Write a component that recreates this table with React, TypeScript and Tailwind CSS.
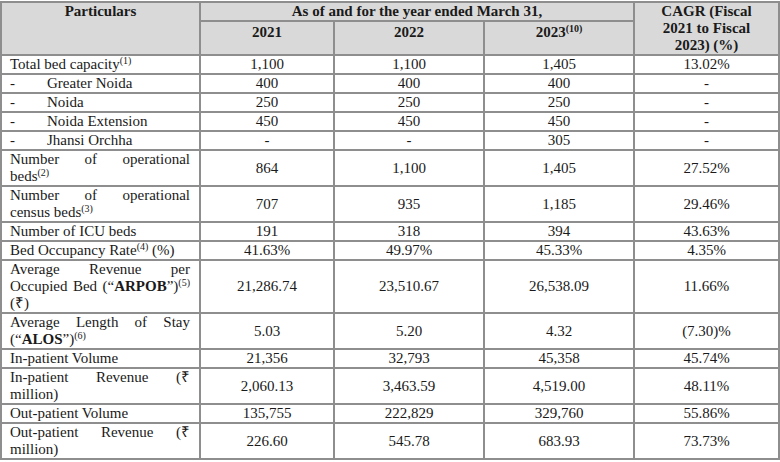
type Row = {
  label: React.ReactNode[];
  indent?: boolean;
  values: React.ReactNode[];
};

const Sup = ({ children }: { children: React.ReactNode }) => (
  <sup className="text-[10px]">{children}</sup>
);

const rows: Row[] = [
  { label: [<>Total bed capacity<Sup>(1)</Sup></>], values: ['1,100', '1,100', '1,405', '13.02%'] },
  { label: ['Greater Noida'], indent: true, values: ['400', '400', '400', '-'] },
  { label: ['Noida'], indent: true, values: ['250', '250', '250', '-'] },
  { label: ['Noida Extension'], indent: true, values: ['450', '450', '450', '-'] },
  { label: ['Jhansi Orchha'], indent: true, values: ['-', '-', '305', '-'] },
  {
    label: ['Number of operational', <>beds<Sup>(2)</Sup></>],
    values: ['864', '1,100', '1,405', '27.52%'],
  },
  {
    label: ['Number of operational', <>census beds<Sup>(3)</Sup></>],
    values: ['707', '935', '1,185', '29.46%'],
  },
  { label: ['Number of ICU beds'], values: ['191', '318', '394', '43.63%'] },
  {
    label: [<>Bed Occupancy Rate<Sup>(4)</Sup> (%)</>],
    values: ['41.63%', '49.97%', '45.33%', '4.35%'],
  },
  {
    label: [
      'Average Revenue per',
      <>Occupied Bed (“<b>ARPOB</b>”)<Sup>(5)</Sup></>,
      '(₹)',
    ],
    values: ['21,286.74', '23,510.67', '26,538.09', '11.66%'],
  },
  {
    label: ['Average Length of Stay', <>(“<b>ALOS</b>”)<Sup>(6)</Sup></>],
    values: ['5.03', '5.20', '4.32', '(7.30)%'],
  },
  { label: ['In-patient Volume'], values: ['21,356', '32,793', '45,358', '45.74%'] },
  {
    label: ['In-patient Revenue (₹', 'million)'],
    values: ['2,060.13', '3,463.59', '4,519.00', '48.11%'],
  },
  { label: ['Out-patient Volume'], values: ['135,755', '222,829', '329,760', '55.86%'] },
  {
    label: ['Out-patient Revenue (₹', 'million)'],
    values: ['226.60', '545.78', '683.93', '73.73%'],
  },
];

const cell = 'border-2 border-[#8e8e8e] p-0';

export default function App() {
  return (
    <div className="w-[780px] h-[462px] bg-white pt-[1px]">
      <table className="table-fixed border-collapse w-[778px] text-[15px] leading-[17px] text-[#1a1a1a] font-['Liberation_Serif','Times_New_Roman',serif]">
        <colgroup>
          <col className="w-[199px]" />
          <col className="w-[134px]" />
          <col className="w-[150px]" />
          <col className="w-[150px]" />
          <col className="w-[145px]" />
        </colgroup>
        <thead className="bg-[#d9d9d9] font-bold">
          <tr>
            <th rowSpan={2} className={`${cell} align-top text-center`}>
              Particulars
            </th>
            <th colSpan={3} className={`${cell} align-top text-center`}>
              As of and for the year ended March 31,
            </th>
            <th rowSpan={2} className={`${cell} align-top text-center`}>
              CAGR (Fiscal
              <br />
              2021 to Fiscal
              <br />
              2023) (%)
            </th>
          </tr>
          <tr>
            <th className={`${cell} align-top text-center h-[34px] pt-[2px]`}>2021</th>
            <th className={`${cell} align-top text-center pt-[2px]`}>2022</th>
            <th className={`${cell} align-top text-center pt-[2px]`}>
              2023<Sup>(10)</Sup>
            </th>
          </tr>
        </thead>
        <tbody>
          {rows.map((row, i) => (
            <tr key={i}>
              <td className={`${cell} pl-[8px] pr-[9px] align-middle`}>
                {row.indent ? (
                  <div className="flex">
                    <span className="w-[37px]">-</span>
                    <span>{row.label[0]}</span>
                  </div>
                ) : (
                  row.label.map((line, j) => (
                    <div
                      key={j}
                      className={
                        j < row.label.length - 1
                          ? 'text-justify [text-align-last:justify]'
                          : 'text-left'
                      }
                    >
                      {line}
                    </div>
                  ))
                )}
              </td>
              {row.values.map((v, j) => (
                <td key={j} className={`${cell} text-center align-middle`}>
                  {v}
                </td>
              ))}
            </tr>
          ))}
        </tbody>
      </table>
    </div>
  );
}
